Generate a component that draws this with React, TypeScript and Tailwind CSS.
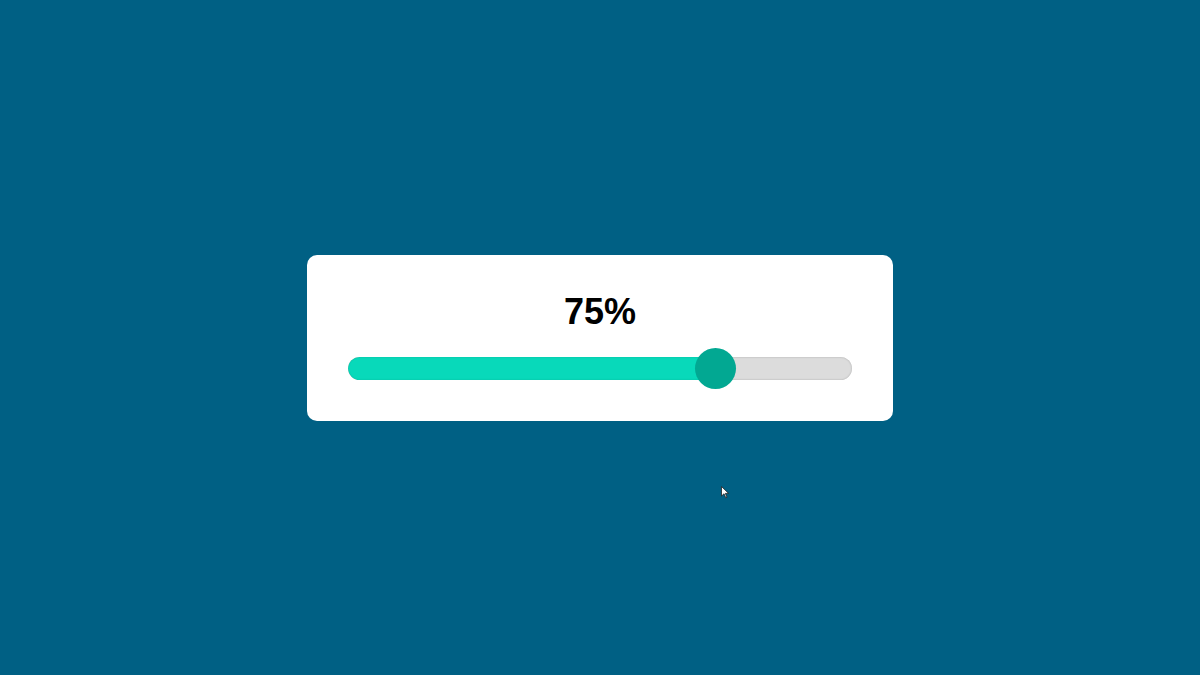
import React from "react";

export default function App() {
  const value = 75;
  const trackW = 504;
  const thumb = 41;
  const center = thumb / 2 + (value / 100) * (trackW - thumb);
  return (
    <div
      className="relative flex h-screen w-full items-center justify-center bg-[#006084]"
      style={{ fontFamily: '"Liberation Sans", Arial, sans-serif' }}
    >
      <div className="flex w-[586px] flex-col items-center rounded-[10px] bg-white px-[41px] pb-[32px] pt-[37px]">
        <div className="text-[36px] font-bold leading-[40px] text-black">{value}%</div>
        <div className="relative mt-[16px] flex h-[41px] w-full items-center">
          <div className="relative h-[23px] w-full overflow-hidden rounded-full bg-[#dcdcdc] shadow-[inset_0_0_2px_rgba(0,0,0,0.25)]">
            <div
              className="h-full rounded-l-full bg-[#08d9ba] shadow-[inset_0_0_2px_rgba(0,0,0,0.15)]"
              style={{ width: center }}
            />
          </div>
          <div
            className="absolute top-0 h-[41px] w-[41px] rounded-full bg-[#02a892]"
            style={{ left: center - thumb / 2 }}
          />
        </div>
      </div>
      <svg
        className="absolute left-[721px] top-[486px]"
        width="9"
        height="13"
        viewBox="0 0 9 13"
      >
        <path d="M0.5 0.5 L0.5 10 L3 7.8 L4.8 11.8 L6 11.2 L4.3 7.4 L7.6 7.4 Z" fill="white" stroke="#222" strokeWidth="0.8" />
      </svg>
    </div>
  );
}
